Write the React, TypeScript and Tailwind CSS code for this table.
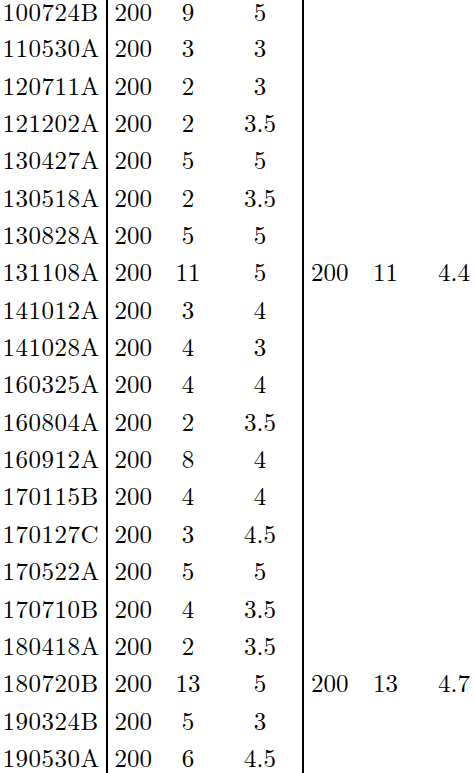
import React from "react";

type Row = {
  id: string;
  n: string;
  k: string;
  v: string;
  extra?: [string, string, string];
};

const rows: Row[] = [
  { id: "100724B", n: "200", k: "9", v: "5" },
  { id: "110530A", n: "200", k: "3", v: "3" },
  { id: "120711A", n: "200", k: "2", v: "3" },
  { id: "121202A", n: "200", k: "2", v: "3.5" },
  { id: "130427A", n: "200", k: "5", v: "5" },
  { id: "130518A", n: "200", k: "2", v: "3.5" },
  { id: "130828A", n: "200", k: "5", v: "5" },
  { id: "131108A", n: "200", k: "11", v: "5", extra: ["200", "11", "4.4"] },
  { id: "141012A", n: "200", k: "3", v: "4" },
  { id: "141028A", n: "200", k: "4", v: "3" },
  { id: "160325A", n: "200", k: "4", v: "4" },
  { id: "160804A", n: "200", k: "2", v: "3.5" },
  { id: "160912A", n: "200", k: "8", v: "4" },
  { id: "170115B", n: "200", k: "4", v: "4" },
  { id: "170127C", n: "200", k: "3", v: "4.5" },
  { id: "170522A", n: "200", k: "5", v: "5" },
  { id: "170710B", n: "200", k: "4", v: "3.5" },
  { id: "180418A", n: "200", k: "2", v: "3.5" },
  { id: "180720B", n: "200", k: "13", v: "5", extra: ["200", "13", "4.7"] },
  { id: "190324B", n: "200", k: "5", v: "3" },
  { id: "190530A", n: "200", k: "6", v: "4.5" },
];

const App = () => {
  return (
    <div className="w-[474px] h-[773px] overflow-hidden bg-white text-black text-[25px] font-['Latin_Modern_Roman']">
      <div className="-mt-[9px]">
        {rows.map((r, i) => (
          <div
            key={r.id}
            className={`flex h-[37.35px] leading-[37.35px] whitespace-nowrap ${i === 0 ? "pt-[1px]" : ""}`}
          >
            <div className="w-[106px] pl-[2.5px] tracking-[0.5px]">{r.id}</div>
            <div className="w-[46px] pl-[6.5px] border-l-2 border-black">{r.n}</div>
            <div className="w-[72px] text-center">{r.k}</div>
            <div className="w-[72px] text-center">{r.v}</div>
            <div className="w-[6px]" />
            <div className="w-[71px] pl-[7px] border-l-2 border-black">{r.extra?.[0]}</div>
            <div className="w-[50px]">{r.extra?.[1]}</div>
            <div className="w-[47px] text-right">{r.extra?.[2]}</div>
          </div>
        ))}
      </div>
    </div>
  );
};

export default App;
